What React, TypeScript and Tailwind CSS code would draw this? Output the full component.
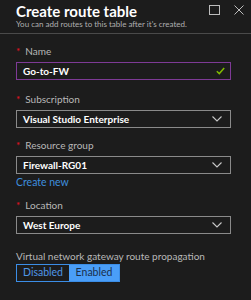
import React from 'react'

const font = { fontFamily: 'Lato, "Open Sans", sans-serif' }

function Label({ text, required = true }: { text: string; required?: boolean }) {
  return (
    <div className="flex items-center h-[16px] text-[10px] text-[#b8b8b8]">
      {required && <span className="text-[#e81123] text-[10px] mr-[5px] leading-none">*</span>}
      {text}
    </div>
  )
}

function Chevron() {
  return (
    <svg width="10" height="6" viewBox="0 0 10 6" fill="none">
      <path d="M0.5 0.5 L5 5 L9.5 0.5" stroke="#c8c8c8" strokeWidth="1.1" />
    </svg>
  )
}

function Select({ value }: { value: string }) {
  return (
    <div className="mt-[3px] h-[18px] w-[215px] border border-[#8a8a8a] flex items-center justify-between pl-[6px] pr-[8px] text-[10px] font-bold text-white">
      <span>{value}</span>
      <Chevron />
    </div>
  )
}

export default function App() {
  return (
    <div className="w-[251px] h-[300px] bg-[#1c1c1c] overflow-hidden" style={font}>
      <div className="h-[34px] border-b border-[#4a4a4a] pl-[16px] pr-[7px] flex justify-between">
        <div>
          <div className="text-[15px] font-bold text-white leading-[18px] mt-[2px]">Create route table</div>
          <div className="text-[8px] text-[#b0b0b0] leading-[10px] mt-[-1px]">You can add routes to this table after it's created.</div>
        </div>
        <div className="flex gap-[14px] mt-[5px]">
          <div className="w-[11px] h-[10px] border border-[#bdbdbd]" />
          <svg width="10" height="10" viewBox="0 0 10 10">
            <path d="M0.5 0.5 L9.5 9.5 M9.5 0.5 L0.5 9.5" stroke="#bdbdbd" strokeWidth="1" />
          </svg>
        </div>
      </div>
      <div className="pl-[16px] pt-[9px]">
        <Label text="Name" />
        <div className="mt-[3px] h-[18px] w-[215px] border border-[#7e3a96] flex items-center justify-between pl-[6px] pr-[5px] text-[10px] font-bold text-white">
          <span>Go-to-FW</span>
          <svg width="9" height="8" viewBox="0 0 9 8" fill="none">
            <path d="M0.8 4.2 L3.3 6.6 L8.2 1" stroke="#7fba00" strokeWidth="1.5" />
          </svg>
        </div>
        <div className="mt-[11px]">
          <Label text="Subscription" />
          <Select value="Visual Studio Enterprise" />
        </div>
        <div className="mt-[9px]">
          <Label text="Resource group" />
          <Select value="Firewall-RG01" />
          <div className="text-[10.5px] text-[#3e8ede] leading-[16px]">Create new</div>
        </div>
        <div className="mt-[7px]">
          <Label text="Location" />
          <Select value="West Europe" />
        </div>
        <div className="mt-[14px]">
          <Label text="Virtual network gateway route propagation" required={false} />
          <div className="flex w-[104px] h-[18px] border border-[#3b8de6] text-[10.5px]">
            <div className="w-[52px] flex items-center justify-center text-[#4f97e6]">Disabled</div>
            <div className="flex-1 flex items-center justify-center bg-[#4a9ef8] text-[#1b2f4a]">Enabled</div>
          </div>
        </div>
      </div>
    </div>
  )
}
